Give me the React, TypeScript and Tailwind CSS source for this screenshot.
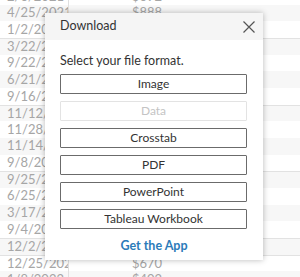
import React from 'react';

const ROWS = [
  { d: '2/6/2021', v: '$692', line: false },
  { d: '4/25/2021', v: '$888', line: false },
  { d: '1/2/2022', v: '$540', line: false },
  { d: '3/22/2021', v: '$712', line: true },
  { d: '9/22/2021', v: '$455', line: false },
  { d: '6/21/2022', v: '$631', line: false },
  { d: '9/16/2021', v: '$802', line: false },
  { d: '11/12/2021', v: '$390', line: true },
  { d: '11/28/2022', v: '$512', line: false },
  { d: '11/14/2021', v: '$744', line: false },
  { d: '9/8/2022', v: '$623', line: false },
  { d: '9/25/2021', v: '$581', line: true },
  { d: '6/25/2022', v: '$470', line: false },
  { d: '3/17/2022', v: '$905', line: false },
  { d: '9/4/2022', v: '$318', line: false },
  { d: '12/2/2021', v: '$657', line: true },
  { d: '12/25/2022', v: '$670', line: true },
  { d: '1/8/2022', v: '$402', line: false },
];

const FORMATS = ['Image', 'Data', 'Crosstab', 'PDF', 'PowerPoint', 'Tableau Workbook'];

const App = () => {
  return (
    <div className="relative w-[300px] h-[277px] overflow-hidden bg-white" style={{ fontFamily: 'Lato, "Open Sans", sans-serif' }}>
      {/* background table */}
      <div className="-mt-[12px] flex flex-col">
        {ROWS.map((r, i) => (
          <div
            key={r.d + i}
            className={`flex h-[16.67px] items-center text-[13px] text-[#a6a6a6] ${i % 2 === 1 ? 'bg-[#f7f7f7]' : 'bg-white'} ${r.line ? 'border-t border-[#e2e2e2]' : ''}`}
          >
            <div className="w-[69px] h-full pl-[7px] flex items-center border-r border-[#e0e0e0] whitespace-nowrap overflow-hidden">
              {r.d}
            </div>
            <div className="flex-1 pl-[63px] whitespace-nowrap">{r.v}</div>
          </div>
        ))}
      </div>

      {/* dialog */}
      <div className="absolute left-[45px] top-[13px] w-[218px] h-[247px] bg-white shadow-[0_0_6px_rgba(0,0,0,0.28)] flex flex-col">
        <div className="h-[27px] bg-[#f5f5f5] flex items-center justify-between pl-[15px] pr-[7px]">
          <span className="text-[12.5px] text-[#333]">Download</span>
          <svg width="14" height="14" viewBox="0 0 14 14" className="text-[#555]">
            <path d="M1.5 1.5 L12.5 12.5 M12.5 1.5 L1.5 12.5" stroke="currentColor" strokeWidth="1.2" fill="none" />
          </svg>
        </div>
        <div className="flex flex-col px-[15px] pt-[13px]">
          <div className="text-[12.5px] text-[#333] leading-[16px] mb-[5px]">Select your file format.</div>
          <div className="flex flex-col gap-[7px]">
            {FORMATS.map((f) => {
              const disabled = f === 'Data';
              return (
                <div
                  key={f}
                  className={`h-[20px] w-[187px] flex items-center justify-center text-[12px] rounded-[1px] border ${disabled ? 'border-[#e3e3e3] text-[#c4c4c4]' : 'border-[#6b6b6b] text-[#333]'}`}
                >
                  {f}
                </div>
              );
            })}
          </div>
          <div className="mt-[8px] text-center text-[12.5px] font-bold text-[#2b7bb9]">Get the App</div>
        </div>
      </div>
    </div>
  );
};

export default App;
